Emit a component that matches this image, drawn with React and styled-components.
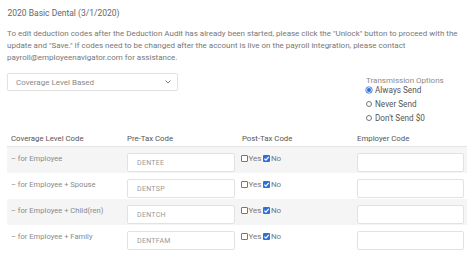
import React from 'react';
import styled, { createGlobalStyle } from 'styled-components';

const GlobalStyle = createGlobalStyle`
	html, body {
		margin: 0;
		padding: 0;
		background: #ffffff;
		font-family: Roboto, "Noto Sans", sans-serif;
	}
`;

const rows = [
	{ label: '– for Employee', code: 'DENTEE' },
	{ label: '– for Employee + Spouse', code: 'DENTSP' },
	{ label: '– for Employee + Child(ren)', code: 'DENTCH' },
	{ label: '– for Employee + Family', code: 'DENTFAM' },
];

const options = ['Always Send', 'Never Send', "Don't Send $0"];

const CheckBox = ({ checked }) => (
	<StyledCheck checked={checked}>
		{checked ? (
			<svg width="7" height="7" viewBox="0 0 10 10">
				<path d="M2 5.2 L4.2 7.4 L8.2 2.8" fill="none" stroke="#fff" strokeWidth="1.8" />
			</svg>
		) : null}
	</StyledCheck>
);

const App = () => (
	<Page>
		<GlobalStyle />
		<Title>2020 Basic Dental (3/1/2020)</Title>
		<Intro>
			To edit deduction codes after the Deduction Audit has already been started, please click the "Unlock" button to proceed with the
			<br />
			update and "Save." If codes need to be changed after the account is live on the payroll integration, please contact
			<br />
			payroll@employeenavigator.com for assistance.
		</Intro>
		<Controls>
			<Select>
				<span>Coverage Level Based</span>
				<svg width="6" height="4" viewBox="0 0 6 4">
					<path d="M0.5 0.5 L3 3 L5.5 0.5" fill="none" stroke="#777" strokeWidth="0.9" />
				</svg>
			</Select>
			<Transmission>
				<TransLabel>Transmission Options</TransLabel>
				{options.map((o, i) => (
					<RadioRow key={o}>
						<Radio selected={i === 0} />
						{o}
					</RadioRow>
				))}
			</Transmission>
		</Controls>
		<Table>
			<HeadRow>
				<HeadCell>Coverage Level Code</HeadCell>
				<HeadCell>Pre-Tax Code</HeadCell>
				<HeadCell>Post-Tax Code</HeadCell>
				<HeadCell>Employer Code</HeadCell>
			</HeadRow>
			{rows.map((r, i) => (
				<Row key={r.code} shaded={i % 2 === 0}>
					<Label>{r.label}</Label>
					<Cell>
						<CodeInput>{r.code}</CodeInput>
					</Cell>
					<Checks>
						<CheckBox />Yes <CheckBox checked />No
					</Checks>
					<Cell>
						<CodeInput />
					</Cell>
				</Row>
			))}
		</Table>
	</Page>
);

const Page = styled.div`
	padding: 7px 7px 0 7px;
	width: 460px;
`;

const Title = styled.div`
	font-size: 8.5px;
	line-height: 12px;
	color: #666;
	margin-left: 0.5px;
`;

const Intro = styled.p`
	margin: 9px 0 0 0;
	font-size: 8px;
	line-height: 12px;
	color: #777;
	white-space: nowrap;
`;

const Controls = styled.div`
	display: flex;
	align-items: flex-start;
	margin-top: 9px;
`;

const Select = styled.div`
	width: 171px;
	height: 18px;
	box-sizing: border-box;
	border: 1px solid #e3e3e3;
	border-radius: 2px;
	display: flex;
	align-items: center;
	justify-content: space-between;
	padding: 0 6px 0 8px;
	font-size: 8px;
	color: #8a8a8a;
	box-shadow: 0 0 2px rgba(0, 0, 0, 0.06);
`;

const Transmission = styled.div`
	margin-left: 188px;
	margin-top: 3px;
	display: flex;
	flex-direction: column;
`;

const TransLabel = styled.div`
	font-size: 8px;
	line-height: 10px;
	color: #8a8a8a;
	margin-bottom: -3px;
`;

const RadioRow = styled.div`
	display: flex;
	align-items: center;
	gap: 2px;
	height: 14px;
	font-size: 8.2px;
	color: #555;
`;

const Radio = styled.span`
	width: 6px;
	height: 6px;
	border-radius: 50%;
	box-sizing: border-box;
	border: ${p => (p.selected ? '1.5px solid #cfe0f7' : '1px solid #777')};
	background: ${p => (p.selected ? '#2f6fdc' : '#fff')};
	box-shadow: ${p => (p.selected ? '0 0 0 0.5px #2f6fdc' : 'none')};
	margin-right: 1px;
`;

const Table = styled.div`
	margin-top: 5px;
	width: 460px;
`;

const grid = `
	display: grid;
	grid-template-columns: 116px 115px 115px 114px;
`;

const HeadRow = styled.div`
	${grid}
	height: 17px;
	align-items: center;
	border-bottom: 1px solid #e4e4e4;
	box-sizing: border-box;
`;

const HeadCell = styled.div`
	font-size: 7.8px;
	color: #555;
	padding-left: 4px;
`;

const Row = styled.div`
	${grid}
	height: 26px;
	background: ${p => (p.shaded ? '#f5f5f5' : '#fff')};
	align-items: start;
`;

const Label = styled.div`
	font-size: 7.6px;
	color: #8a8a8a;
	padding: 7px 0 0 4px;
`;

const Cell = styled.div`
	padding: 6px 3px 0 4px;
`;

const CodeInput = styled.div`
	height: 19px;
	box-sizing: border-box;
	background: #fff;
	border: 1px solid #e2e2e2;
	border-radius: 2px;
	font-size: 7px;
	letter-spacing: 0.3px;
	color: #999;
	display: flex;
	align-items: center;
	padding-left: 9px;
`;

const Checks = styled.div`
	display: flex;
	align-items: center;
	padding: 7px 0 0 3px;
	font-size: 8px;
	color: #777;
	white-space: pre;
`;

const StyledCheck = styled.span`
	width: 7px;
	height: 7px;
	box-sizing: border-box;
	border: ${p => (p.checked ? 'none' : '1px solid #777')};
	background: ${p => (p.checked ? '#2f6fdc' : '#fff')};
	border-radius: 1px;
	display: inline-flex;
	align-items: center;
	justify-content: center;
	margin-right: 0.5px;
`;

export default App;
